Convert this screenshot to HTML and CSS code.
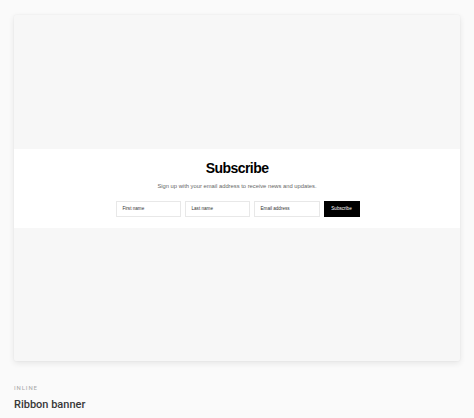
FILE: index.html
```html
<!DOCTYPE html>
<html>
<head>
<meta charset="utf-8">
<link rel="stylesheet" href="styles.css">
</head>
<body>
<div class="page">
  <div class="card">
    <section class="ribbon">
      <h1 class="title">Subscribe</h1>
      <p class="sub">Sign up with your email address to receive news and updates.</p>
      <form class="form">
        <div class="field w65">First name</div>
        <div class="field w65">Last name</div>
        <div class="field w66">Email address</div>
        <div class="btn">Subscribe</div>
      </form>
    </section>
  </div>
  <div class="meta">
    <div class="kicker">INLINE</div>
    <div class="name">Ribbon banner</div>
  </div>
</div>
</body>
</html>
```

FILE: styles.css
```css
html, body {
  margin: 0;
  padding: 0;
  background: #fafafa;
}
body {
  width: 474px;
  height: 418px;
  overflow: hidden;
  font-family: "Liberation Sans", Arial, sans-serif;
}
.page {
  padding: 15px 14px 0 14px;
}
.card {
  width: 446px;
  height: 346px;
  background: #f7f7f7;
  border-radius: 2px;
  box-shadow: 0 2px 6px rgba(0, 0, 0, 0.09), 0 0 2px rgba(0, 0, 0, 0.05);
  display: flex;
  flex-direction: column;
  justify-content: center;
}
.ribbon {
  background: #ffffff;
  padding: 10px 0 11px;
  display: flex;
  flex-direction: column;
  align-items: center;
}
.title {
  margin: 0;
  font-size: 14px;
  line-height: 18px;
  font-weight: 700;
  letter-spacing: -0.55px;
  color: #000;
}
.sub {
  margin: 5px 0 0;
  font-size: 5.8px;
  line-height: 8px;
  color: #666;
}
.form {
  margin: 11px 0 0;
  display: flex;
  gap: 4px;
  padding-left: 1px;
}
.field {
  box-sizing: border-box;
  height: 16px;
  border: 1px solid #e8e8e8;
  background: #fff;
  font-size: 4.6px;
  line-height: 14px;
  padding-left: 6px;
  color: #333;
}
.w65 { width: 65px; }
.w66 { width: 66px; }
.btn {
  box-sizing: border-box;
  width: 36px;
  height: 16px;
  background: #000;
  color: #fff;
  font-size: 4.6px;
  line-height: 16px;
  text-align: center;
}
.meta {
  padding-top: 23px;
}
.kicker {
  font-family: Roboto, "Liberation Sans", sans-serif;
  font-size: 6px;
  letter-spacing: 0.9px;
  color: #a8a8a8;
  line-height: 8px;
}
.name {
  margin-top: 6px;
  font-family: Roboto, "Liberation Sans", sans-serif;
  font-weight: 500;
  font-size: 11px;
  line-height: 14px;
  color: #383838;
}
```
